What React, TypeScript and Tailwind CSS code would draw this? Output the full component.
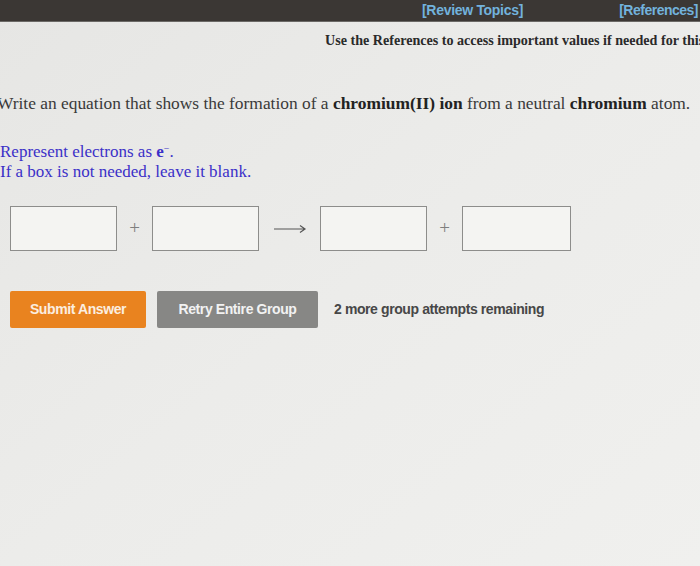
import React from "react";

const serif = { fontFamily: '"Liberation Serif", "Times New Roman", serif' };
const sans = { fontFamily: '"Liberation Sans", Arial, sans-serif' };

function AnswerBox({ wide }: { wide?: boolean }) {
  return (
    <div
      className={
        wide
          ? "h-[45px] w-[109px] border border-[#8d8d8b] bg-[#f4f4f2]"
          : "h-[45px] w-[107px] border border-[#8d8d8b] bg-[#f4f4f2]"
      }
    />
  );
}

export default function App() {
  return (
    <div className="h-[566px] w-[700px] overflow-hidden bg-gradient-to-br from-[#e6e6e4] via-[#ececea] to-[#f0f0ee]">
      <div className="flex h-[22px] items-center border-b border-[#6b6966] bg-[#3b3734]" style={sans}>
        <span className="ml-[422px] text-[14px] font-bold tracking-[-0.3px] text-[#72b2dc]">[Review Topics]</span>
        <span className="ml-auto mr-[2px] text-[14px] font-bold tracking-[-0.5px] text-[#72b2dc]">[References]</span>
      </div>
      <div className="whitespace-nowrap pl-[325px] pt-[8px] text-[14.1px] font-bold text-[#2a2a2a]" style={serif}>
        Use the References to access important values if needed for this question.
      </div>

      <div className="ml-[-3px] mt-[39px] whitespace-nowrap text-[17.4px] leading-[26px] text-[#3a3a3a]" style={serif}>
        Write an equation that shows the formation of a <b className="text-[#222]">chromium(II)</b>{" "}
        <b className="text-[#222]">ion</b> from a neutral <b className="text-[#222]">chromium</b> atom.
      </div>

      <div className="mt-[26px] text-[17px] leading-[20px] text-[#3b30c8]" style={serif}>
        <div>
          Represent electrons as <b>e</b>
          <sup className="text-[10px]">−</sup>.
        </div>
        <div>If a box is not needed, leave it blank.</div>
      </div>

      <div className="ml-[10px] mt-[24px] flex items-center" style={serif}>
        <AnswerBox />
        <span className="w-[35px] text-center text-[19px] text-[#7e7e7e]">+</span>
        <AnswerBox />
        <span className="flex w-[61px] justify-center">
          <svg width="34" height="10" viewBox="0 0 34 10">
            <path d="M1 5h31M27 1.5l5 3.5-5 3.5" fill="none" stroke="#555" strokeWidth="1.2" />
          </svg>
        </span>
        <AnswerBox />
        <span className="w-[35px] text-center text-[19px] text-[#7e7e7e]">+</span>
        <AnswerBox wide />
      </div>

      <div className="ml-[10px] mt-[40px] flex items-center gap-[11px]" style={sans}>
        <button className="h-[37px] w-[136px] rounded-[2px] bg-[#e9831f] text-[14px] font-bold tracking-[-0.4px] text-[#fbeee0]">
          Submit Answer
        </button>
        <button className="h-[37px] w-[161px] rounded-[2px] bg-[#878785] text-[14px] font-bold tracking-[-0.4px] text-[#f2f2f2]">
          Retry Entire Group
        </button>
        <span className="ml-[5px] text-[14px] font-bold tracking-[-0.4px] text-[#474747]">
          2 more group attempts remaining
        </span>
      </div>
    </div>
  );
}
